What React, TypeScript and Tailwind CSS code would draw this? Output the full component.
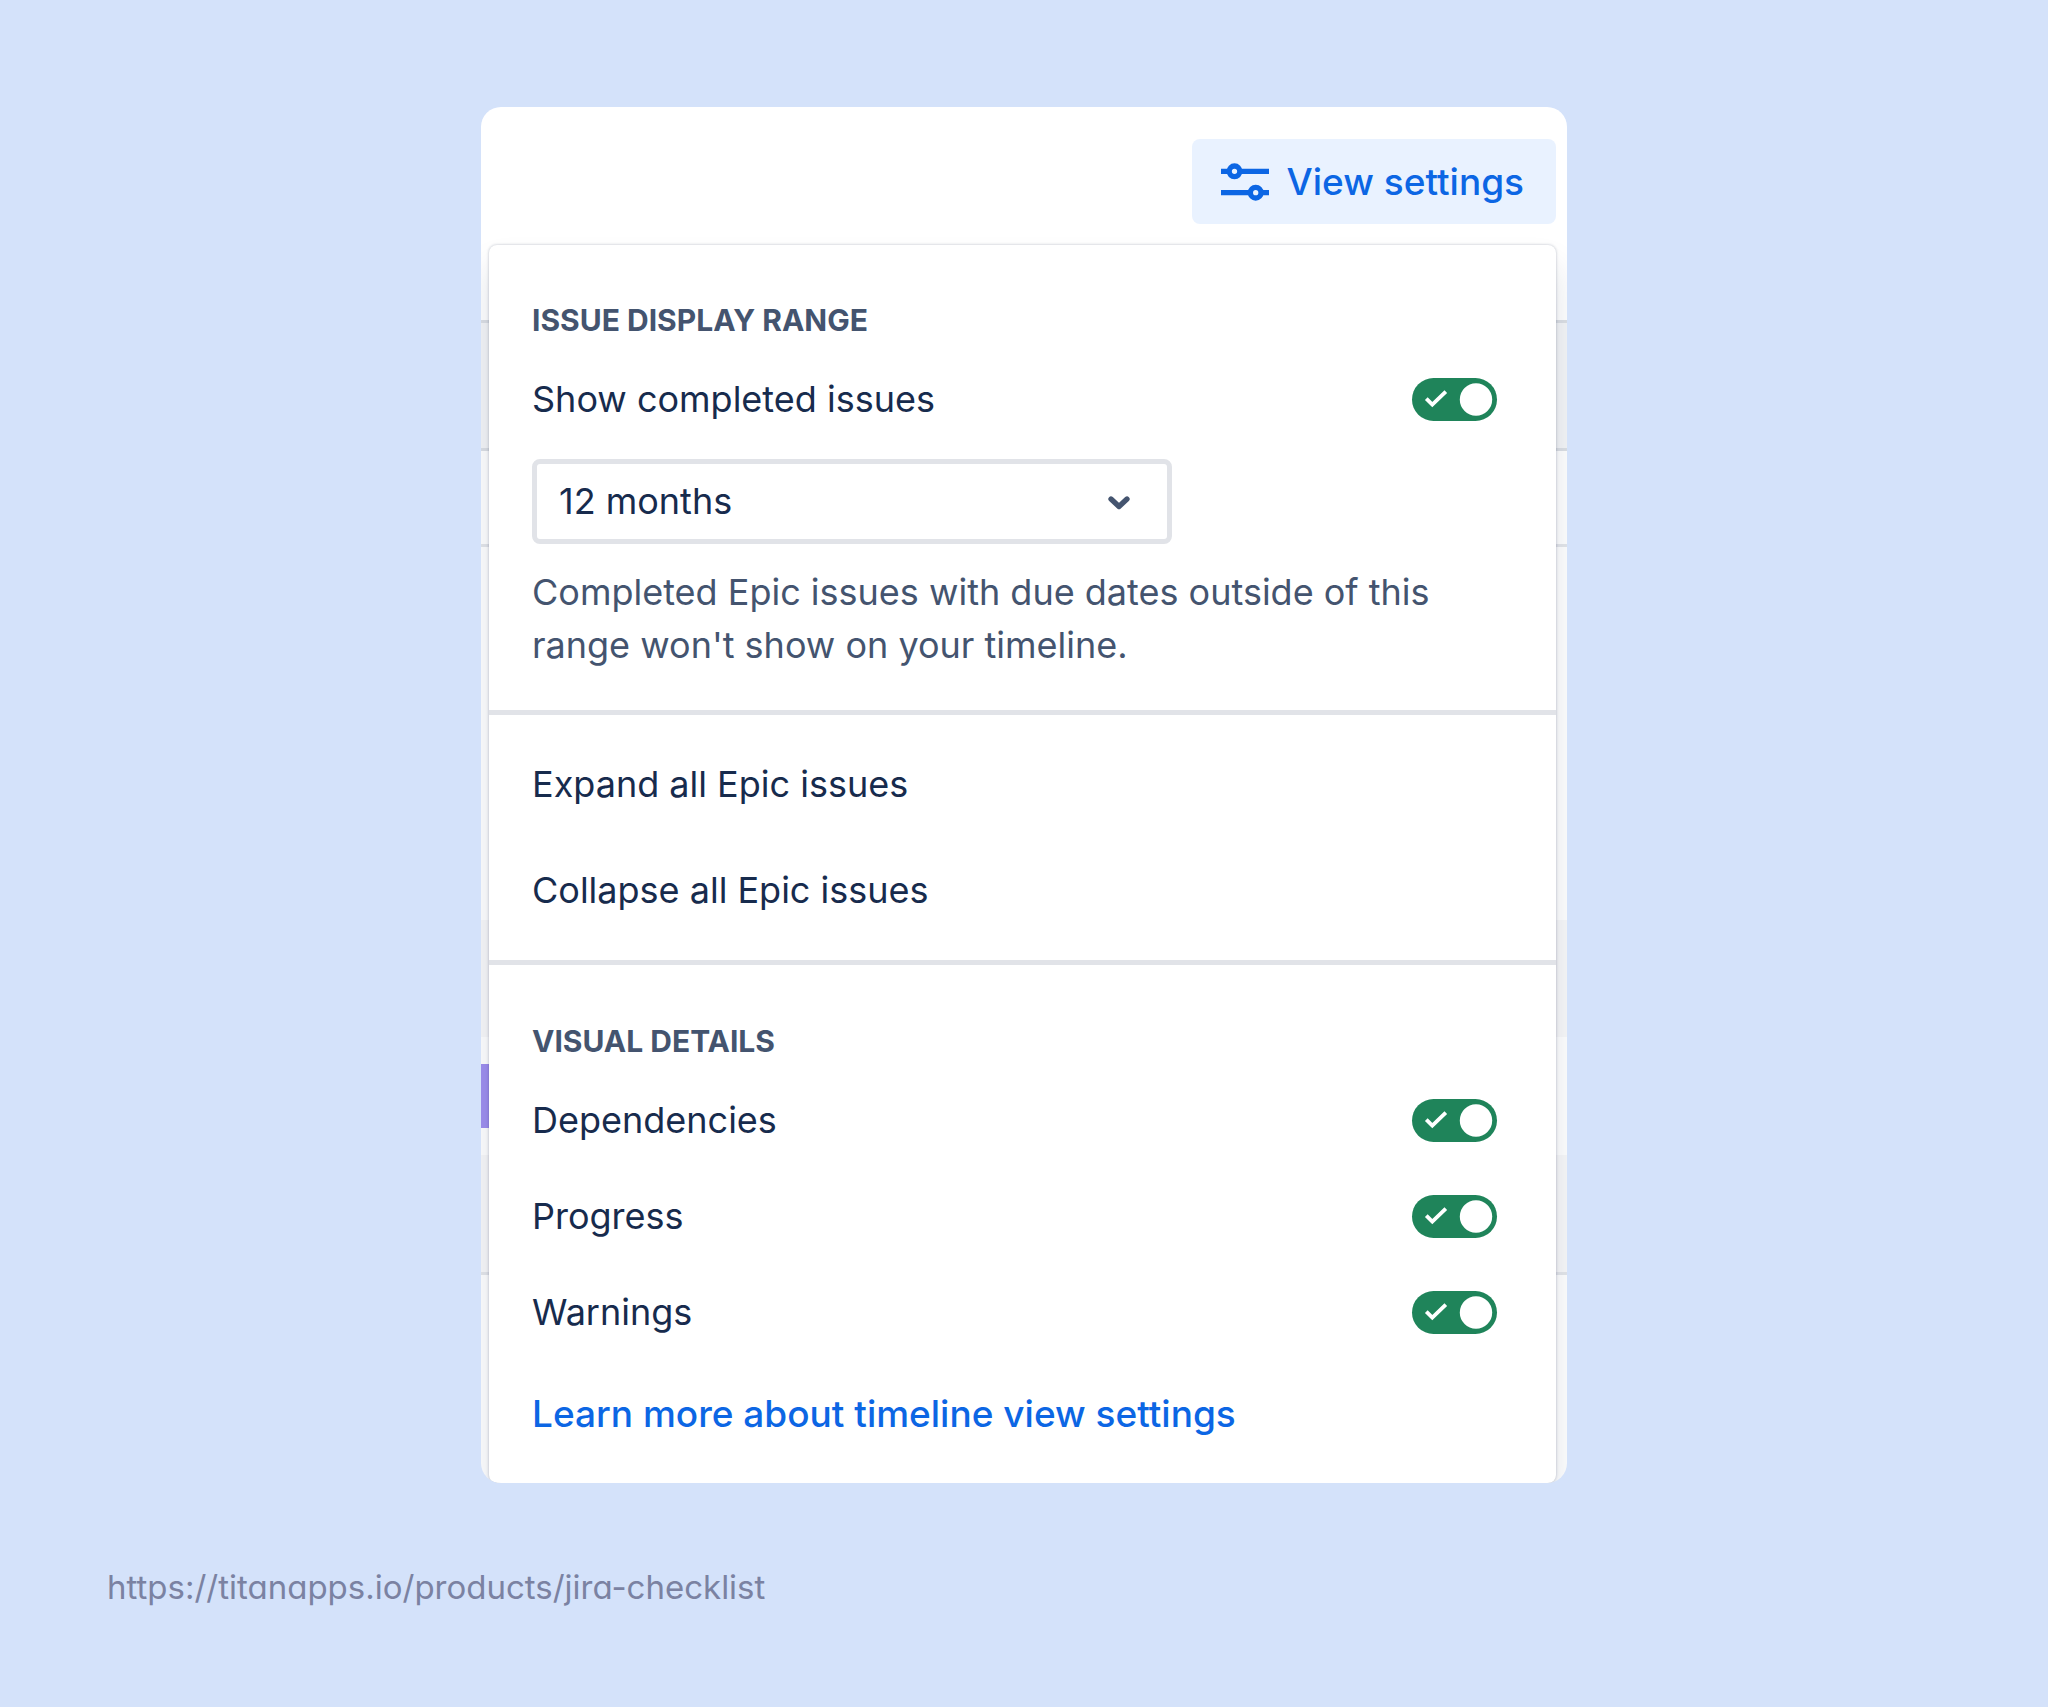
import { useState } from "react";
import type { ReactNode } from "react";

const months = ["1 month", "3 months", "6 months", "12 months"];

const SettingsIcon = () => (
    <svg width="48" height="38" viewBox="0 0 48 38" fill="none" stroke="currentColor" strokeWidth="5.3" aria-hidden="true">
        <path d="M0 8.3h8.5M18.5 8.3H48M0 29.7h29.5M39.5 29.7H48" />
        <circle cx="13.5" cy="8.3" r="5.3" />
        <circle cx="34.7" cy="29.7" r="5.3" />
    </svg>
);

interface SwitchProps {
    id: string;
    label: string;
    className?: string;
}

const SwitchRow = ({ id, label, className = "" }: SwitchProps) => {
    const [checked, setChecked] = useState(true);

    return (
        <div className={`flex items-center justify-between ${className}`}>
            <label htmlFor={id}>{label}</label>
            <span className="grid">
                <input
                    id={id}
                    type="checkbox"
                    role="switch"
                    checked={checked}
                    onChange={() => setChecked(!checked)}
                    className="col-start-1 row-start-1 h-[43px] w-[85px] cursor-pointer appearance-none rounded-full bg-[#626f86] checked:bg-[#1f845a]"
                />
                <svg
                    width="85"
                    height="43"
                    viewBox="0 0 85 43"
                    className="pointer-events-none col-start-1 row-start-1"
                    aria-hidden="true"
                >
                    {checked && (
                        <path
                            d="M14.3 20.6l6 6L33.8 13.6"
                            fill="none"
                            stroke="white"
                            strokeWidth="3.8"
                            strokeLinejoin="miter"
                        />
                    )}
                    <circle cx={checked ? 64 : 21} cy="21.5" r="16.2" fill="white" />
                </svg>
            </span>
        </div>
    );
};

const SectionTitle = ({ children }: { children: ReactNode }) => (
    <h2 className="text-[30px] leading-10 font-bold text-[#44546f] uppercase">{children}</h2>
);

// Timeline rows that show on both sides of the open menu
const TimelineRows = () => (
    <div className="col-start-1 row-start-1 flex flex-col" aria-hidden="true">
        <div className="h-[213px]" />
        <div className="h-[131px] border-y-3 border-[#dcdfe4] bg-[#f4f5f7]" />
        <div className="h-24 border-b-3 border-[#e4e6ea]" />
        <div className="h-[373px]" />
        <div className="h-[117px] bg-[#f8f8f9]" />
        <div className="h-[118px] py-[27px]">
            <div className="h-16 w-10 bg-[#9f8fef]" />
        </div>
        <div className="h-[120px] border-b-3 border-[#e4e6ea] bg-[#f8f8f9]" />
    </div>
);

const SettingsMenu = () => (
    <div className="mr-[11px] ml-2 rounded-lg bg-white shadow-[0_21px_32px_rgba(9,30,66,0.13),0_0_3px_rgba(9,30,66,0.28)]">
        <section className="border-b-5 border-[#e1e3e8] px-[43px] pt-[55px] pb-[38px]">
            <SectionTitle>Issue display range</SectionTitle>
            <SwitchRow id="completed" label="Show completed issues" className="mt-[33px] mr-4 h-[53px]" />
            <div className="mt-[33px] grid w-[640px] items-center">
                <select
                    aria-label="Completed issues range"
                    defaultValue="12 months"
                    className="col-start-1 row-start-1 h-[85px] appearance-none rounded-lg border-5 border-[#e1e3e8] bg-white px-[22px]"
                >
                    {months.map((month) => (
                        <option key={month}>{month}</option>
                    ))}
                </select>
                <svg
                    width="24"
                    height="18"
                    viewBox="0 0 24 18"
                    className="pointer-events-none col-start-1 row-start-1 mr-[41px] justify-self-end text-[#44546f]"
                    fill="none"
                    stroke="currentColor"
                    strokeWidth="5.3"
                    strokeLinecap="round"
                    strokeLinejoin="round"
                    aria-hidden="true"
                >
                    <path d="M4 6l8 7.5L20 6" />
                </svg>
            </div>
            <p className="mt-[22px] text-[#44546f]">
                Completed Epic issues with due dates outside of this range won't show on your timeline.
            </p>
        </section>

        <section className="flex flex-col border-b-5 border-[#e1e3e8] pt-4 pb-[17px]">
            <button className="h-[106px] px-[43px] text-left">Expand all Epic issues</button>
            <button className="h-[106px] px-[43px] text-left">Collapse all Epic issues</button>
        </section>

        <section className="px-[43px] pt-14 pb-[43px]">
            <SectionTitle>Visual details</SectionTitle>
            <div className="mt-[11px] mr-4">
                <SwitchRow id="dependencies" label="Dependencies" className="h-24" />
                <SwitchRow id="progress" label="Progress" className="h-24" />
                <SwitchRow id="warnings" label="Warnings" className="h-24" />
            </div>
            <a href="#timeline-settings" className="mt-[27px] block text-[37px] font-medium text-[#0c66e4]">
                Learn more about timeline view settings
            </a>
        </section>
    </div>
);

export default function App() {
    return (
        <main className="min-h-screen bg-[#d4e2fa] pt-[107px] pb-24 font-['Inter',sans-serif] text-[36px] leading-[53px] text-[#172b4d]">
            <div className="mx-auto grid max-w-[1086px] overflow-hidden rounded-[20px] bg-white">
                <TimelineRows />
                <div className="col-start-1 row-start-1">
                    <div className="flex justify-end pt-8 pr-[11px] pb-[21px]">
                        <button className="flex h-[85px] items-center gap-[18px] rounded-lg bg-[#e9f2ff] pr-8 pl-[29px] text-[37px] font-medium text-[#0c66e4]">
                            <SettingsIcon />
                            View settings
                        </button>
                    </div>
                    <SettingsMenu />
                </div>
            </div>
            <footer className="mt-[77px] px-[107px]">
                <a
                    href="https://titanapps.io/products/jira-checklist"
                    className="text-[33px] text-[#7b82a2] [font-feature-settings:'cv11']"
                >
                    https://titanapps.io/products/jira-checklist
                </a>
            </footer>
        </main>
    );
}
